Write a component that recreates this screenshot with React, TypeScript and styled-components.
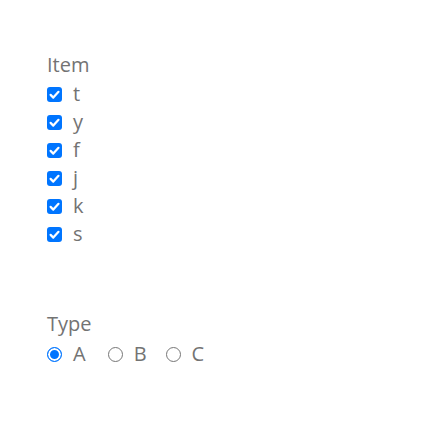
import React from 'react'
import styled, { createGlobalStyle } from 'styled-components'

const items = ['t', 'y', 'f', 'j', 'k', 's']
const types = [
  { label: 'A', checked: true, gap: 22 },
  { label: 'B', checked: false, gap: 19 },
  { label: 'C', checked: false, gap: 0 },
]

const GlobalStyle = createGlobalStyle`
  html, body {
    margin: 0;
    background: #fff;
  }
  body {
    font-family: 'Open Sans', 'Liberation Sans', sans-serif;
  }
`

const CheckMark = () => (
  <svg width='15' height='15' viewBox='0 0 15 15'>
    <path
      d='M3.6 7.9l2.7 2.7 5.2-5.8'
      fill='none'
      stroke='#fff'
      strokeWidth='2.2'
      strokeLinecap='round'
      strokeLinejoin='round'
    />
  </svg>
)

const App = () => {
  return (
    <>
      <GlobalStyle />
      <Page>
        <Group>
          <Heading>Item</Heading>
          {items.map((item) => (
            <CheckRow key={item}>
              <CheckBox>
                <CheckMark />
              </CheckBox>
              <Label>{item}</Label>
            </CheckRow>
          ))}
        </Group>
        <Group $top={62}>
          <Heading>Type</Heading>
          <RadioRow>
            {types.map((type) => (
              <RadioOption key={type.label} $gap={type.gap}>
                <Radio $checked={type.checked} />
                <Label>{type.label}</Label>
              </RadioOption>
            ))}
          </RadioRow>
        </Group>
      </Page>
    </>
  )
}

const Page = styled.div`
  padding: 51px 0 0 47px;
  color: #737373;
  font-size: 20px;
`

const Group = styled.div<{ $top?: number }>`
  display: flex;
  flex-direction: column;
  margin-top: ${({ $top }) => $top || 0}px;
`

const Heading = styled.div`
  line-height: 28px;
  height: 29px;
`

const CheckRow = styled.div`
  display: flex;
  align-items: center;
  height: 28px;
  line-height: 28px;
`

const CheckBox = styled.span`
  width: 15px;
  height: 15px;
  border-radius: 3px;
  background: #0075ff;
  display: flex;
  margin-right: 11px;
  flex-shrink: 0;
`

const Label = styled.span``

const RadioRow = styled.div`
  display: flex;
  align-items: center;
  height: 28px;
  line-height: 28px;
  margin-top: 1px;
`

const RadioOption = styled.label<{ $gap: number }>`
  display: flex;
  align-items: center;
  margin-right: ${({ $gap }) => $gap}px;
`

const Radio = styled.span<{ $checked: boolean }>`
  box-sizing: border-box;
  width: 15px;
  height: 15px;
  border-radius: 50%;
  margin-right: 11px;
  flex-shrink: 0;
  border: ${({ $checked }) => ($checked ? '1.5px solid #0075ff' : '1px solid #767676')};
  background: ${({ $checked }) => ($checked ? '#0075ff' : '#fff')};
  box-shadow: ${({ $checked }) => ($checked ? 'inset 0 0 0 2px #fff' : 'none')};
`

export default App
